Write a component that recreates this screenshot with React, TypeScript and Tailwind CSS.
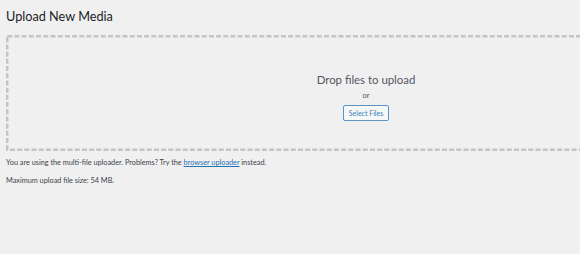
export default function App() {
  return (
    <div className="h-[254px] w-[580px] overflow-hidden bg-[#f0f0f1] text-[#3c434a] font-['Lato','Open_Sans',sans-serif]">
      <div className="pl-[6px] pt-[6px]">
        <h1 className="text-[12.7px] leading-[20px] font-normal text-[#1d2327]">Upload New Media</h1>

        {/* drop zone, wider than the window; dashed outline drawn in svg for the dash rhythm */}
        <div className="relative mt-[9px] w-[720px] h-[116px] flex flex-col items-center justify-center">
          <svg className="absolute inset-0 pointer-events-none" width="720" height="116">
            <rect x="1.25" y="1.25" width="717.5" height="113.5" fill="none" stroke="#c3c4c7" strokeWidth="2.5" strokeDasharray="5 2.2" />
          </svg>
          <p className="text-[11.4px] leading-[16px] text-[#50575e] mt-[7px]">Drop files to upload</p>
          <p className="text-[7.5px] leading-[12px] mt-[2px] text-[#50575e]">or</p>
          <button className="mt-[3px] h-[16px] w-[46px] rounded-[2px] border border-[#5b93c4] bg-[#f6f7f7] text-[#3b7fb8] text-[7px] leading-none">
            Select Files
          </button>
        </div>

        <p className="mt-[6px] text-[7.3px] leading-[12px]">
          You are using the multi-file uploader. Problems? Try the{' '}
          <a className="text-[#2271b1] underline">browser uploader</a> instead.
        </p>
        <p className="mt-[6px] text-[7.3px] leading-[12px]">Maximum upload file size: 54 MB.</p>
      </div>
    </div>
  );
}
